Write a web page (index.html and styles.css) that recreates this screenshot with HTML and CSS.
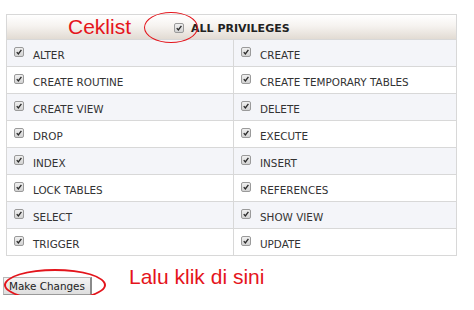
FILE: index.html
```html
<!DOCTYPE html>
<html>
<head>
<meta charset="utf-8">
<link rel="stylesheet" href="styles.css">
</head>
<body>
<div class="panel">
  <div class="head">
    <span class="note note-top">Ceklist</span>
    <span class="head-check">
      <span class="cb"><svg viewBox="0 0 10 10"><path d="M2.2 5.2 L4.2 7.4 L8 2.4" /></svg></span>
      <span class="ring ring-top"></span>
    </span>
    <span class="head-label">ALL PRIVILEGES</span>
  </div>
  <div class="grid">
    <div class="cell odd"><span class="cb"><svg viewBox="0 0 10 10"><path d="M2.2 5.2 L4.2 7.4 L8 2.4" /></svg></span>ALTER</div>
    <div class="cell odd right"><span class="cb"><svg viewBox="0 0 10 10"><path d="M2.2 5.2 L4.2 7.4 L8 2.4" /></svg></span>CREATE</div>
    <div class="cell"><span class="cb"><svg viewBox="0 0 10 10"><path d="M2.2 5.2 L4.2 7.4 L8 2.4" /></svg></span>CREATE ROUTINE</div>
    <div class="cell right"><span class="cb"><svg viewBox="0 0 10 10"><path d="M2.2 5.2 L4.2 7.4 L8 2.4" /></svg></span>CREATE TEMPORARY TABLES</div>
    <div class="cell odd"><span class="cb"><svg viewBox="0 0 10 10"><path d="M2.2 5.2 L4.2 7.4 L8 2.4" /></svg></span>CREATE VIEW</div>
    <div class="cell odd right"><span class="cb"><svg viewBox="0 0 10 10"><path d="M2.2 5.2 L4.2 7.4 L8 2.4" /></svg></span>DELETE</div>
    <div class="cell"><span class="cb"><svg viewBox="0 0 10 10"><path d="M2.2 5.2 L4.2 7.4 L8 2.4" /></svg></span>DROP</div>
    <div class="cell right"><span class="cb"><svg viewBox="0 0 10 10"><path d="M2.2 5.2 L4.2 7.4 L8 2.4" /></svg></span>EXECUTE</div>
    <div class="cell odd"><span class="cb"><svg viewBox="0 0 10 10"><path d="M2.2 5.2 L4.2 7.4 L8 2.4" /></svg></span>INDEX</div>
    <div class="cell odd right"><span class="cb"><svg viewBox="0 0 10 10"><path d="M2.2 5.2 L4.2 7.4 L8 2.4" /></svg></span>INSERT</div>
    <div class="cell"><span class="cb"><svg viewBox="0 0 10 10"><path d="M2.2 5.2 L4.2 7.4 L8 2.4" /></svg></span>LOCK TABLES</div>
    <div class="cell right"><span class="cb"><svg viewBox="0 0 10 10"><path d="M2.2 5.2 L4.2 7.4 L8 2.4" /></svg></span>REFERENCES</div>
    <div class="cell odd"><span class="cb"><svg viewBox="0 0 10 10"><path d="M2.2 5.2 L4.2 7.4 L8 2.4" /></svg></span>SELECT</div>
    <div class="cell odd right"><span class="cb"><svg viewBox="0 0 10 10"><path d="M2.2 5.2 L4.2 7.4 L8 2.4" /></svg></span>SHOW VIEW</div>
    <div class="cell last"><span class="cb"><svg viewBox="0 0 10 10"><path d="M2.2 5.2 L4.2 7.4 L8 2.4" /></svg></span>TRIGGER</div>
    <div class="cell last right"><span class="cb"><svg viewBox="0 0 10 10"><path d="M2.2 5.2 L4.2 7.4 L8 2.4" /></svg></span>UPDATE</div>
  </div>
</div>
<div class="actions">
  <span class="btn-wrap">
    <button class="btn">Make Changes</button>
    <span class="ring ring-btn"></span>
  </span>
  <span class="note note-bottom">Lalu klik di sini</span>
</div>
</body>
</html>
```

FILE: styles.css
```css
html, body {
  margin: 0;
  padding: 0;
  background: #ffffff;
}
body {
  font-family: "DejaVu Sans", Verdana, sans-serif;
  color: #333333;
}
.panel {
  margin: 14px 0 0 6px;
  width: 451px;
  border: 1px solid #d8d8d8;
  border-bottom: none;
  box-sizing: border-box;
}
.head {
  height: 24px;
  display: flex;
  align-items: center;
  background: linear-gradient(to bottom, #ffffff 0%, #f6f3f0 45%, #e2dbd3 100%);
  border-bottom: 1px solid #d8d8d8;
}
.note {
  font-family: "Liberation Sans", Arial, sans-serif;
  color: #e5141b;
  font-size: 21px;
  line-height: 1;
}
.note-top {
  margin-left: 61px;
  margin-top: -2px;
}
.head-check {
  position: relative;
  margin-left: 43px;
  display: inline-flex;
  margin-top: 1px;
}
.head-check .cb {
  margin-right: 7px;
  margin-top: 0;
}
.head-label {
  font-weight: bold;
  font-size: 11px;
  margin-top: 2px;
  color: #222;
}
.ring {
  position: absolute;
  border: 1.5px solid #e3141b;
  border-radius: 50%;
  box-sizing: border-box;
}
.ring-top {
  left: -30px;
  top: -11px;
  width: 54px;
  height: 31px;
}
.grid {
  display: grid;
  grid-template-columns: 226px 223px;
}
.cell {
  height: 27px;
  box-sizing: border-box;
  border-bottom: 1px solid #d8d8d8;
  display: flex;
  align-items: center;
  padding-left: 7px;
  padding-top: 4px;
  font-size: 10.4px;
  background: #ffffff;
}
.cell.odd {
  background: #f4f5f9;
}
.cell.right {
  border-left: 1px solid #d8d8d8;
}
.cb {
  display: inline-block;
  width: 10px;
  height: 10px;
  box-sizing: border-box;
  border: 1px solid #9a9a9a;
  border-radius: 2px;
  background: linear-gradient(to bottom, #f0f0f0, #d2d2d2);
  margin-right: 9px;
  margin-top: -6px;
  flex: none;
}
.cb svg {
  display: block;
  width: 8px;
  height: 8px;
}
.cb path {
  fill: none;
  stroke: #2a2a2a;
  stroke-width: 1.7;
}
.actions {
  display: flex;
  align-items: center;
  margin-top: 21px;
  padding-left: 3px;
}
.btn-wrap {
  position: relative;
  display: inline-flex;
}
.btn {
  font-family: "DejaVu Sans", Verdana, sans-serif;
  font-size: 10.4px;
  color: #222;
  background: linear-gradient(to bottom, #f4f4f4, #dedede);
  border: 1px solid #b8b8b8;
  border-right: 2px solid #8a8a8a;
  border-bottom: 1px solid #9a9a9a;
  height: 18px;
  width: 89px;
  padding: 0 0 0 5px;
  text-align: left;
  margin: 0;
}
.ring-btn {
  left: 1px;
  top: -8px;
  width: 102px;
  height: 32px;
  border-width: 2px;
}
.note-bottom {
  margin-left: 37px;
  margin-top: -19px;
}
```
